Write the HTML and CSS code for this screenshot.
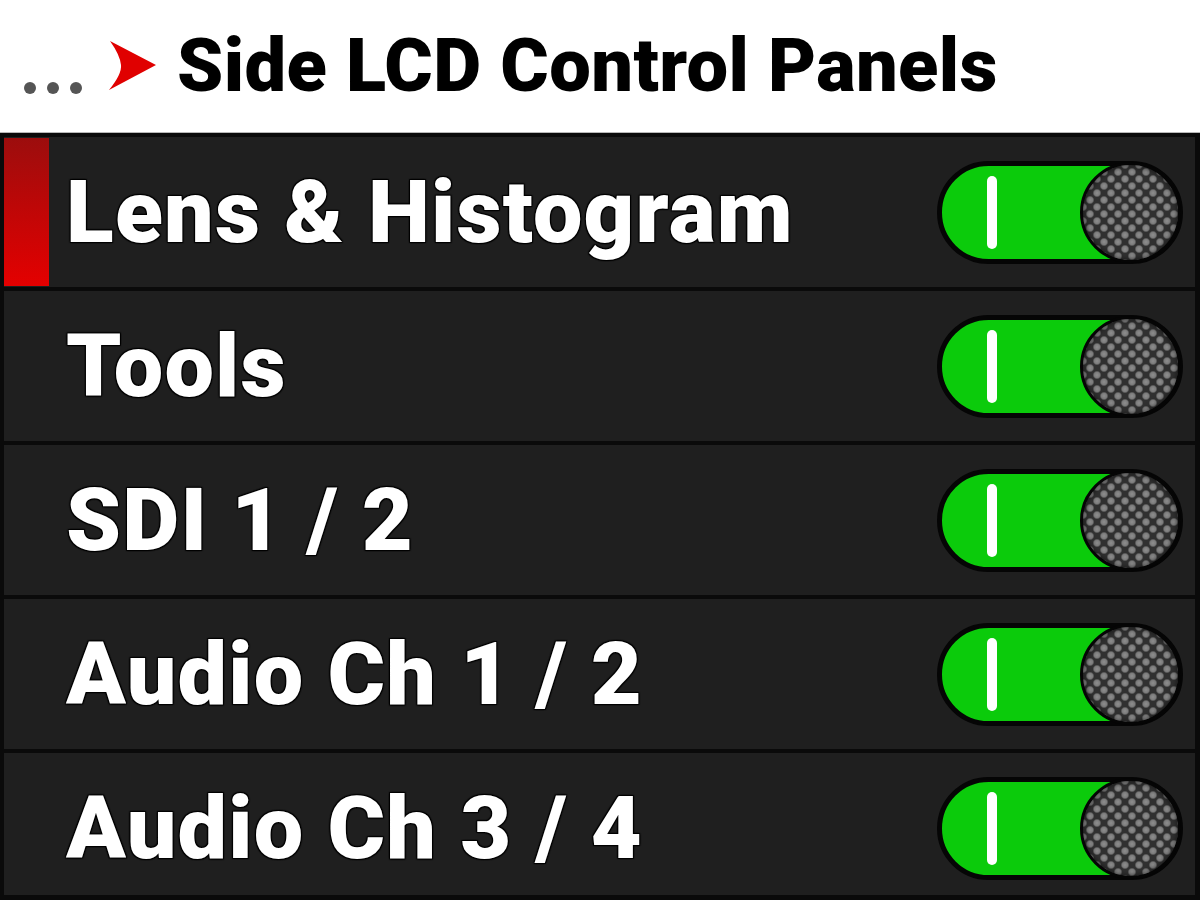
FILE: index.html
```html
<!DOCTYPE html>
<html>
<head>
<meta charset="utf-8">
<link rel="stylesheet" href="styles.css">
</head>
<body>
<div class="screen">
  <header class="crumb">
    <div class="dots"><span></span><span></span><span></span></div>
    <svg class="arrow" width="54" height="56" viewBox="0 0 54 56"><path d="M5 3 L51 27 L4 52 Q17 36 16 27 Q15 17 5 3 Z" fill="#e00000"/></svg>
    <h1 class="title">Side LCD Control Panels</h1>
  </header>
  <div class="panel">
    <div class="row selected">
      <span class="label">Lens &amp; Histogram</span>
      <div class="toggle"><span class="bar"></span><span class="knob"></span></div>
    </div>
    <div class="row">
      <span class="label">Tools</span>
      <div class="toggle"><span class="bar"></span><span class="knob"></span></div>
    </div>
    <div class="row">
      <span class="label">SDI 1 / 2</span>
      <div class="toggle"><span class="bar"></span><span class="knob"></span></div>
    </div>
    <div class="row">
      <span class="label">Audio Ch 1 / 2</span>
      <div class="toggle"><span class="bar"></span><span class="knob"></span></div>
    </div>
    <div class="row">
      <span class="label">Audio Ch 3 / 4</span>
      <div class="toggle"><span class="bar"></span><span class="knob"></span></div>
    </div>
  </div>
</div>
</body>
</html>
```
FILE: styles.css
```css
html, body {
  margin: 0;
  padding: 0;
  background: #fff;
}
body {
  width: 1200px;
  height: 900px;
  overflow: hidden;
  font-family: Roboto, "Liberation Sans", sans-serif;
}
.screen {
  width: 1200px;
  height: 900px;
  display: flex;
  flex-direction: column;
}
.crumb {
  height: 133px;
  flex: 0 0 133px;
  box-sizing: border-box;
  border-bottom: 1px solid #b8b8b8;
  display: flex;
  align-items: center;
  padding-left: 24px;
  background: #fff;
}
.dots {
  display: flex;
  gap: 11px;
  margin-top: 44px;
}
.dots span {
  width: 12px;
  height: 12px;
  border-radius: 50%;
  background: #555;
}
.arrow {
  margin-left: 23px;
  display: block;
}
.title {
  margin: 0 0 0 18px;
  font-size: 74px;
  line-height: 74px;
  font-weight: 900;
  color: #000;
  letter-spacing: 0.4px;
}
.panel {
  flex: 1;
  box-sizing: border-box;
  border: 4px solid #0a0a0a;
  border-right-width: 5px;
  border-bottom-width: 5px;
  background: #0a0a0a;
  overflow: hidden;
  display: flex;
  flex-direction: column;
  gap: 4px;
}
.row {
  position: relative;
  flex: 0 0 150px;
  height: 150px;
  background: #1f1f1f;
  display: flex;
  align-items: center;
  justify-content: space-between;
  padding-left: 62px;
  padding-right: 12px;
}
.row.selected::before {
  content: "";
  position: absolute;
  left: 0;
  top: 1px;
  bottom: 1px;
  width: 45px;
  background: linear-gradient(#9c0d0d, #e40000);
}
.label {
  color: #fff;
  font-size: 88px;
  line-height: 88px;
  font-weight: 900;
  letter-spacing: 1.2px;
  text-shadow: 0 0 2px #000, 1px 1px 1px #000, -1px -1px 1px #000, 1px -1px 1px #000, -1px 1px 1px #000;
}
.toggle {
  position: relative;
  width: 236px;
  height: 93px;
  border: 5px solid #050505;
  border-radius: 52px;
  background: #0bcb0b;
}
.bar {
  position: absolute;
  left: 45px;
  top: 10px;
  width: 10px;
  height: 73px;
  border-radius: 5px;
  background: #fff;
}
.knob {
  position: absolute;
  right: -3px;
  top: -4px;
  width: 95px;
  height: 95px;
  border: 3px solid #050505;
  border-radius: 50%;
  background-color: #303030;
  background-image:
    radial-gradient(circle, #8e8e8e 0, #7c7c7c 2.8px, rgba(0,0,0,0) 4.4px),
    radial-gradient(circle, #8e8e8e 0, #7c7c7c 2.8px, rgba(0,0,0,0) 4.4px);
  background-size: 14px 14px;
  background-position: 0 0, 7px 7px;
  box-shadow: inset 0 0 6px rgba(0,0,0,0.6);
}
```
